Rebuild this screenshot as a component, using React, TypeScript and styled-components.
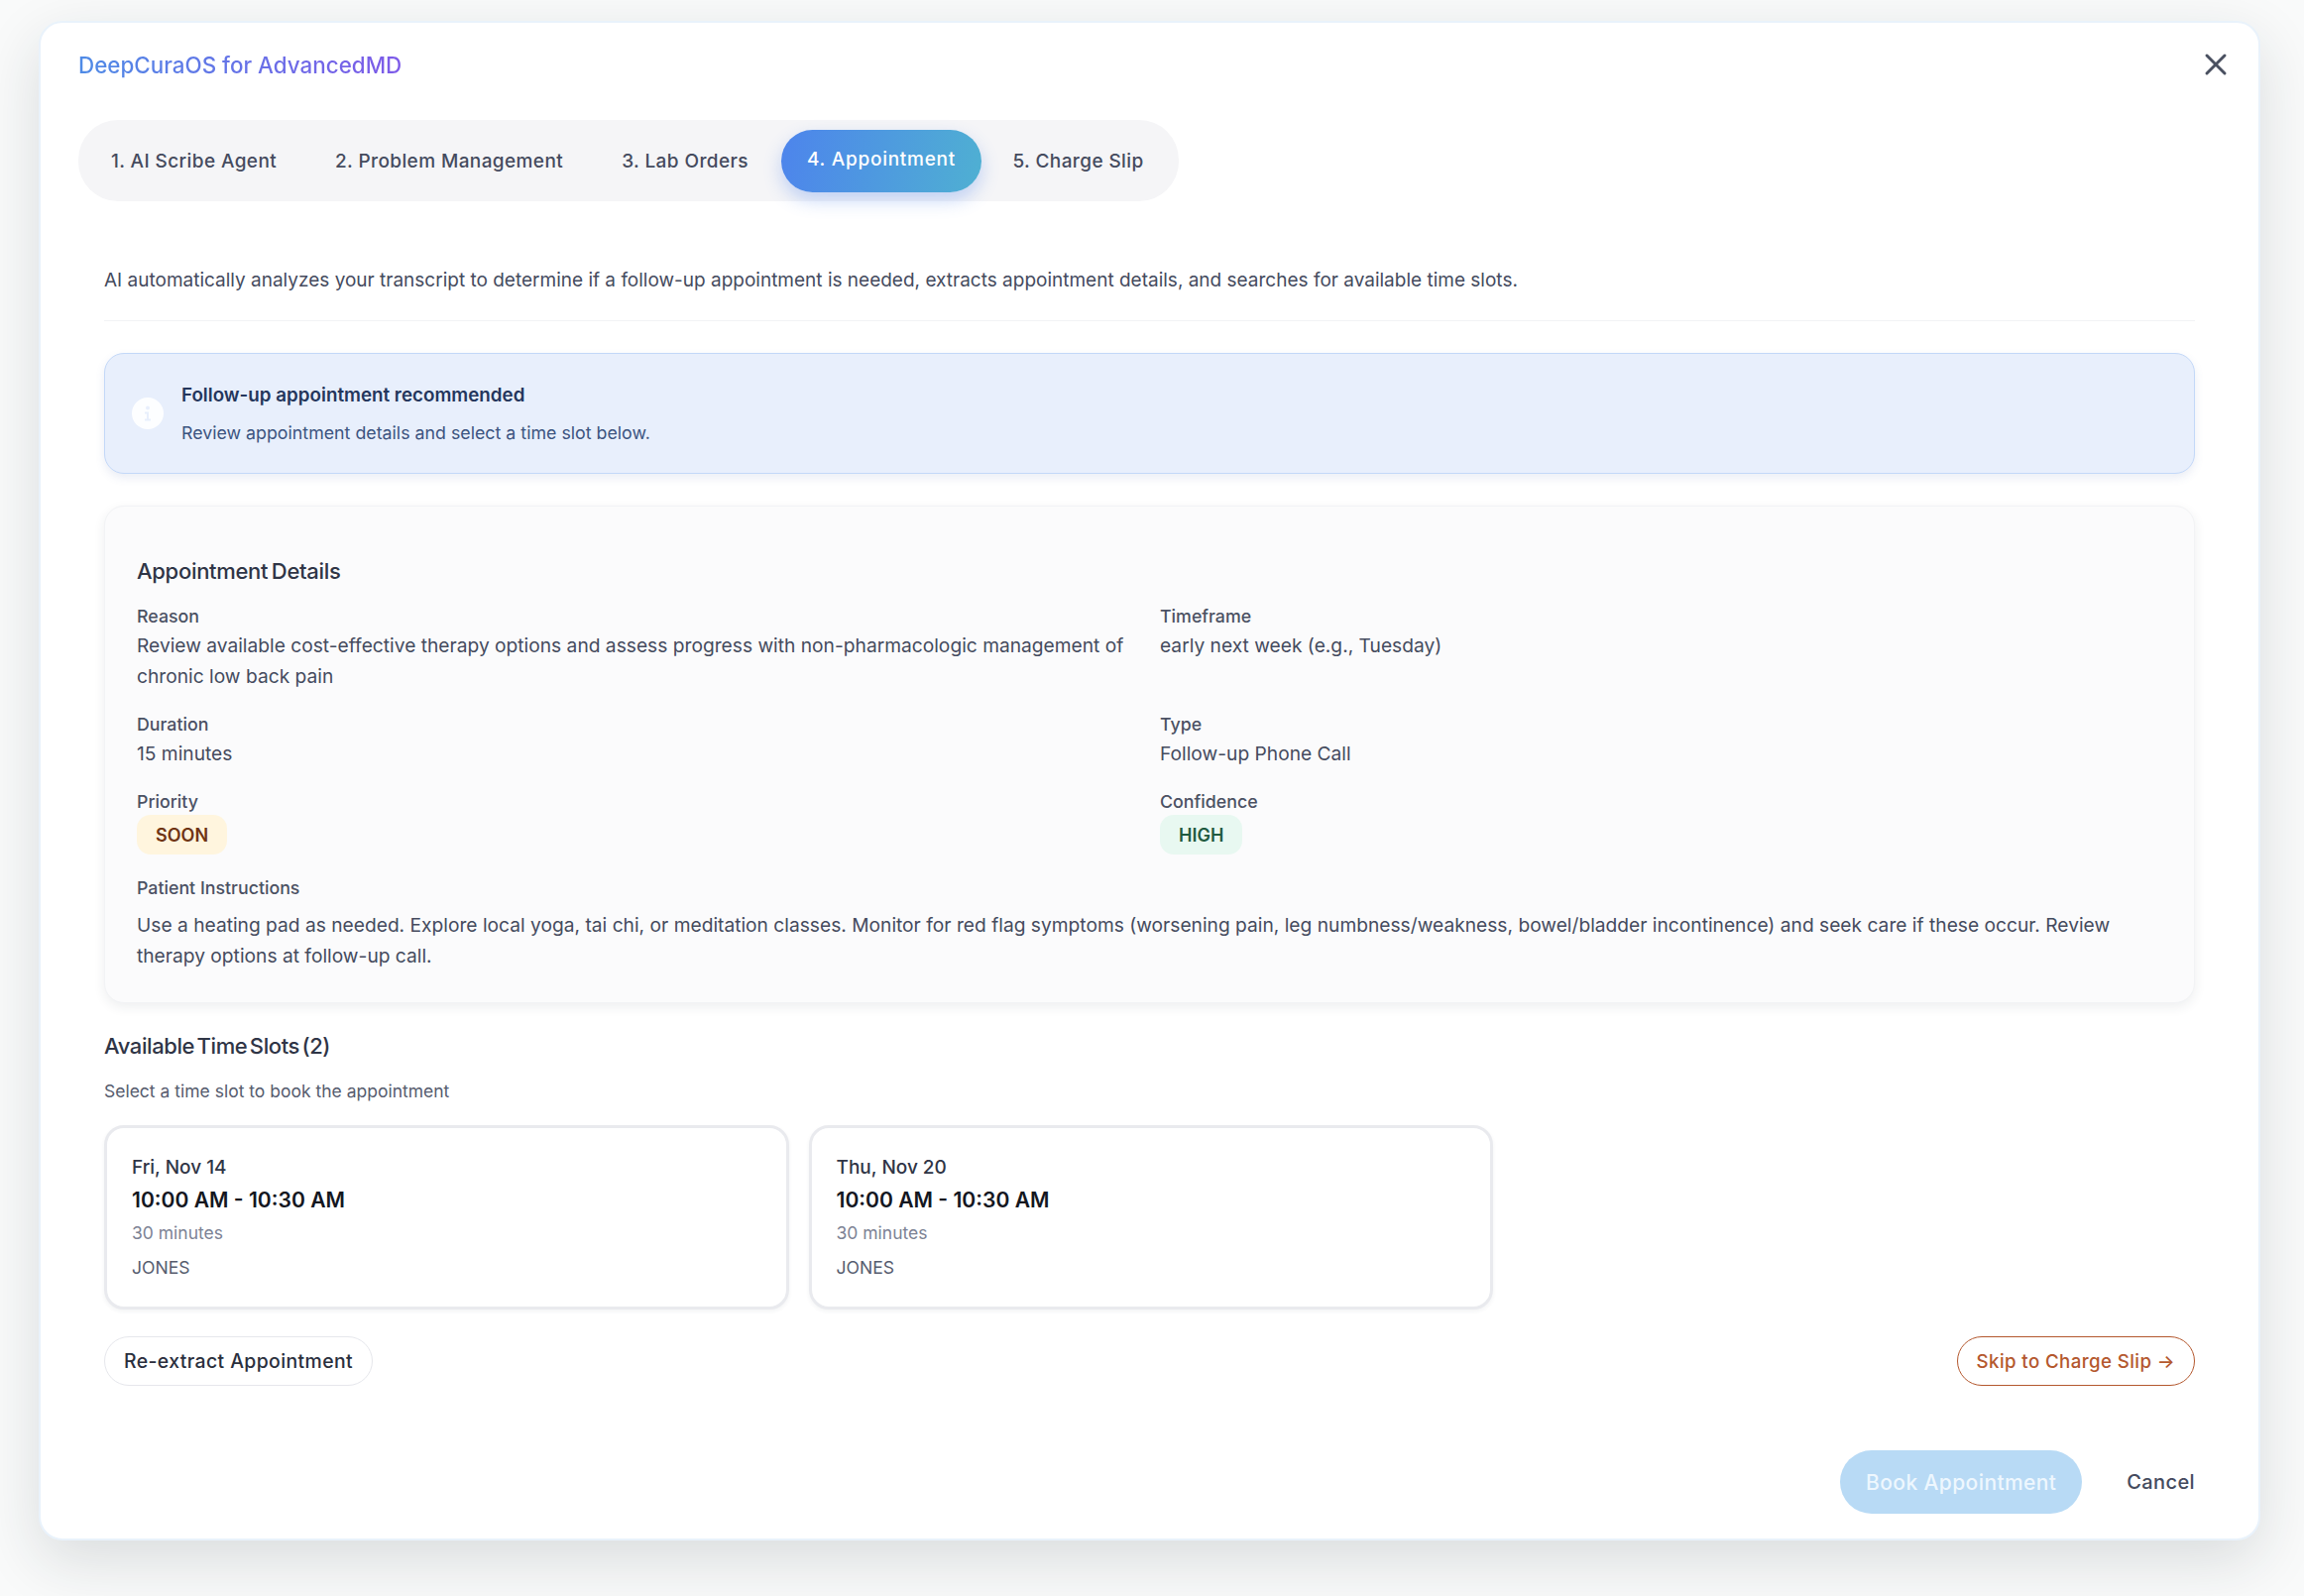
import React from "react";
import styled, { createGlobalStyle } from "styled-components";
import { X } from "lucide-react";

const GlobalStyle = createGlobalStyle`
  html, body {
    margin: 0;
    padding: 0;
    background: #f9fafa;
    font-family: "Inter", "Liberation Sans", sans-serif;
  }
  * { box-sizing: border-box; }
`;

const Page = styled.div`
  width: 2324px;
  height: 1610px;
  padding: 21px 44px 56px 39px;
  overflow: hidden;
`;

const Modal = styled.div`
  height: 1533px;
  background: #ffffff;
  border: 2px solid #e9f2fb;
  border-radius: 24px;
  box-shadow: 0 20px 60px rgba(30, 40, 50, 0.14);
  padding: 0 64px 0 38px;
  display: flex;
  flex-direction: column;
`;

const Header = styled.div`
  height: 84px;
  display: flex;
  align-items: center;
  justify-content: space-between;
  margin-right: -39px;
`;

const Title = styled.h1`
  margin: 0;
  font-size: 22.4px;
  font-weight: 500;
  background: linear-gradient(90deg, #4f8be6, #7d5ae8);
  -webkit-background-clip: text;
  background-clip: text;
  color: transparent;
`;

const CloseButton = styled.button`
  border: 0;
  background: none;
  padding: 0;
  display: flex;
  color: #4a5060;
`;

const TabBar = styled.div`
  width: 1110px;
  height: 82px;
  margin-top: 14px;
  padding: 8px 8px 8px 0;
  display: flex;
  align-items: center;
  background: #f5f5f7;
  border-radius: 40px;
`;

const Tab = styled.div<{ $active?: boolean; $width: number }>`
  width: ${(p) => p.$width}px;
  flex: none;
  height: 63px;
  display: flex;
  align-items: center;
  justify-content: center;
  font-size: 19px;
  font-weight: 500;
  letter-spacing: ${(p) => (p.$active ? "0.75px" : "0.4px")};
  border-radius: 32px;
  color: ${(p) => (p.$active ? "#ffffff" : "#454b5e")};
  background: ${(p) =>
    p.$active ? "linear-gradient(100deg, #4d84ec, #4fb0d2)" : "transparent"};
  box-shadow: ${(p) =>
    p.$active ? "0 8px 18px rgba(77, 132, 236, 0.32)" : "none"};
  padding-bottom: ${(p) => (p.$active ? "3px" : "0")};
`;

const Body = styled.div`
  padding-left: 26px;
  flex: 1;
  display: flex;
  flex-direction: column;
`;

const Description = styled.p`
  margin: 0;
  height: 121px;
  padding-top: 64px;
  font-size: 19px;
  line-height: 32px;
  color: #454b5e;
  border-bottom: 1px solid #f2f3f5;
`;

const Alert = styled.div`
  margin-top: 32px;
  height: 122px;
  display: flex;
  align-items: center;
  gap: 18px;
  padding-left: 27px;
  background: #e8effc;
  border: 1px solid #c3d8f8;
  border-radius: 20px;
  box-shadow: 0 4px 10px rgba(80, 110, 170, 0.12);
`;

const AlertIcon = styled.svg`
  width: 32px;
  height: 32px;
  flex: none;
`;

const AlertText = styled.div`
  display: flex;
  flex-direction: column;
  gap: 14px;
  padding-top: 1px;
`;

const AlertTitle = styled.div`
  font-size: 18.8px;
  line-height: 24px;
  font-weight: 600;
  color: #24365c;
`;

const AlertSub = styled.div`
  font-size: 17.8px;
  line-height: 24px;
  color: #3c5480;
`;

const DetailsCard = styled.div`
  margin-top: 32px;
  height: 502px;
  background: #fbfbfc;
  border: 1px solid #f2f3f5;
  border-radius: 20px;
  box-shadow: 0 4px 12px rgba(40, 50, 70, 0.08);
  padding: 49px 32px 0;
`;

const SectionTitle = styled.h2`
  margin: 0;
  font-size: 22px;
  line-height: 32px;
  font-weight: 500;
  letter-spacing: -0.3px;
  word-spacing: -2px;
  color: #2f3546;
`;

const DetailGrid = styled.div`
  margin-top: 15px;
  display: grid;
  grid-template-columns: 1032px 1fr;
`;

const Field = styled.div<{ $height: number }>`
  height: ${(p) => p.$height}px;
`;

const Label = styled.div`
  font-size: 17.8px;
  line-height: 30px;
  font-weight: 500;
  color: #4b5163;
`;

const Value = styled.div`
  margin-top: -1px;
  font-size: 19.2px;
  line-height: 31px;
  color: #454b5e;
`;

const Badge = styled.div<{ $bg: string; $fg: string }>`
  display: flex;
  align-items: center;
  width: fit-content;
  height: 40px;
  padding: 0 19px;
  margin-top: -2px;
  border-radius: 14px;
  font-size: 18px;
  font-weight: 600;
  background: ${(p) => p.$bg};
  color: ${(p) => p.$fg};
`;

const Instructions = styled(Value)`
  margin-top: 7px;
  line-height: 30.5px;
`;

const SlotsTitle = styled(SectionTitle)`
  margin-top: 27px;
  letter-spacing: -0.4px;
  word-spacing: -3px;
`;

const SlotsHint = styled.div`
  margin-top: 17px;
  font-size: 17.5px;
  line-height: 26px;
  color: #565c6e;
`;

const SlotRow = styled.div`
  margin-top: 21px;
  display: flex;
  gap: 20px;
`;

const SlotCard = styled.div`
  width: 690.5px;
  height: 186px;
  padding: 24px 25px 0;
  background: #ffffff;
  border: 3px solid #e9eaee;
  border-radius: 20px;
  box-shadow: 0 2px 4px rgba(40, 50, 70, 0.06);
`;

const SlotDate = styled.div`
  font-size: 19px;
  line-height: 32px;
  font-weight: 500;
  color: #2f3546;
`;

const SlotTime = styled.div`
  font-size: 21.1px;
  line-height: 34px;
  font-weight: 600;
  color: #14171f;
`;

const SlotLength = styled.div`
  font-size: 17.5px;
  line-height: 32px;
  color: #7c8294;
`;

const SlotDoctor = styled.div`
  margin-top: 3px;
  font-size: 17.6px;
  line-height: 32px;
  color: #565c6e;
`;

const ActionRow = styled.div`
  margin-top: 27px;
  display: flex;
  justify-content: space-between;
`;

const PillButton = styled.button`
  height: 50px;
  padding: 0 19px;
  background: #ffffff;
  border: 1px solid #e6e7ec;
  border-radius: 25px;
  font-family: inherit;
  font-size: 19.4px;
  font-weight: 500;
  letter-spacing: 0.4px;
  color: #2a2f3d;
`;

const SkipButton = styled(PillButton)`
  border-color: #b4582e;
  color: #b4582e;
  font-size: 18.7px;
`;

const Footer = styled.div`
  margin-top: 65px;
  display: flex;
  justify-content: flex-end;
  align-items: center;
  gap: 45px;
`;

const BookButton = styled.button`
  width: 244px;
  height: 64px;
  border: 0;
  border-radius: 32px;
  background: #b8daf5;
  color: #eef7fe;
  font-family: inherit;
  font-size: 21px;
  font-weight: 500;
  letter-spacing: 0.4px;
`;

const CancelButton = styled.button`
  border: 0;
  background: none;
  padding: 0;
  font-family: inherit;
  font-size: 20px;
  font-weight: 500;
  letter-spacing: 0.4px;
  color: #454b5e;
`;

const tabs = [
  { label: "1. AI Scribe Agent", width: 233 },
  { label: "2. Problem Management", width: 282 },
  { label: "3. Lab Orders", width: 194 },
  { label: "4. Appointment", width: 202, active: true },
  { label: "5. Charge Slip", width: 195 },
];

const slots = [
  { date: "Fri, Nov 14", time: "10:00 AM - 10:30 AM" },
  { date: "Thu, Nov 20", time: "10:00 AM - 10:30 AM" },
];

export default function App() {
  return (
    <Page>
      <GlobalStyle />
      <Modal>
        <Header>
          <Title>DeepCuraOS for AdvancedMD</Title>
          <CloseButton>
            <X size={36} strokeWidth={2} />
          </CloseButton>
        </Header>
        <TabBar>
          {tabs.map((t) => (
            <Tab key={t.label} $active={t.active} $width={t.width}>
              {t.label}
            </Tab>
          ))}
        </TabBar>
        <Body>
          <Description>
            AI automatically analyzes your transcript to determine if a follow-up appointment is needed, extracts appointment details, and searches for available time slots.
          </Description>
          <Alert>
            <AlertIcon viewBox="0 0 32 32">
              <circle cx="16" cy="16" r="16" fill="#fdfeff" />
              <circle cx="16" cy="10.5" r="2" fill="#e8effc" />
              <path d="M13 14.5h4v7h2v2h-6v-2h2v-5h-2z" fill="#e8effc" />
            </AlertIcon>
            <AlertText>
              <AlertTitle>Follow-up appointment recommended</AlertTitle>
              <AlertSub>Review appointment details and select a time slot below.</AlertSub>
            </AlertText>
          </Alert>
          <DetailsCard>
            <SectionTitle>Appointment Details</SectionTitle>
            <DetailGrid>
              <Field $height={109}>
                <Label>Reason</Label>
                <Value>
                  Review available cost-effective therapy options and assess progress with non-pharmacologic management of chronic low back pain
                </Value>
              </Field>
              <Field $height={109}>
                <Label>Timeframe</Label>
                <Value>early next week (e.g., Tuesday)</Value>
              </Field>
              <Field $height={78}>
                <Label>Duration</Label>
                <Value>15 minutes</Value>
              </Field>
              <Field $height={78}>
                <Label>Type</Label>
                <Value>Follow-up Phone Call</Value>
              </Field>
              <Field $height={87}>
                <Label>Priority</Label>
                <Badge $bg="#fff5de" $fg="#6f3413">SOON</Badge>
              </Field>
              <Field $height={87}>
                <Label>Confidence</Label>
                <Badge $bg="#e8f8f1" $fg="#1f5a40">HIGH</Badge>
              </Field>
            </DetailGrid>
            <Label>Patient Instructions</Label>
            <Instructions>
              Use a heating pad as needed. Explore local yoga, tai chi, or meditation classes. Monitor for red flag symptoms (worsening pain, leg numbness/weakness, bowel/bladder incontinence) and seek care if these occur. Review therapy options at follow-up call.
            </Instructions>
          </DetailsCard>
          <SlotsTitle>Available Time Slots (2)</SlotsTitle>
          <SlotsHint>Select a time slot to book the appointment</SlotsHint>
          <SlotRow>
            {slots.map((s) => (
              <SlotCard key={s.date}>
                <SlotDate>{s.date}</SlotDate>
                <SlotTime>{s.time}</SlotTime>
                <SlotLength>30 minutes</SlotLength>
                <SlotDoctor>JONES</SlotDoctor>
              </SlotCard>
            ))}
          </SlotRow>
          <ActionRow>
            <PillButton>Re-extract Appointment</PillButton>
            <SkipButton>Skip to Charge Slip →</SkipButton>
          </ActionRow>
          <Footer>
            <BookButton>Book Appointment</BookButton>
            <CancelButton>Cancel</CancelButton>
          </Footer>
        </Body>
      </Modal>
    </Page>
  );
}
